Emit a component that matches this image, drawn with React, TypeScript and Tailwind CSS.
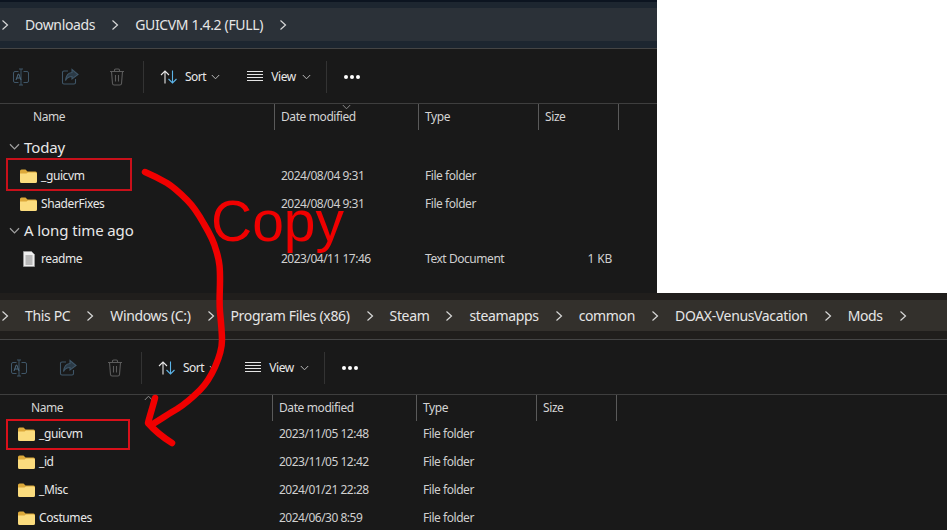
import type { ReactNode } from "react";

const FONT = "font-['Noto_Sans','Open_Sans',sans-serif]";

function Chevron({ className = "" }: { className?: string }) {
  return (
    <svg width="8" height="12" viewBox="0 0 8 12" fill="none" className={`shrink-0 ${className}`}>
      <path d="M1.5 1.5 6.5 6 1.5 10.5" stroke="#d8d8d8" strokeWidth="1.2" />
    </svg>
  );
}

function Caret({ up = false, color = "#b8b8b8", width = 9 }: { up?: boolean; color?: string; width?: number }) {
  return (
    <svg width={width} height={(width * 2) / 3} viewBox="0 0 9 6" fill="none" className="shrink-0">
      <path d={up ? "M.8 5 4.5 1.2 8.2 5" : "M.8 1 4.5 4.8 8.2 1"} stroke={color} strokeWidth="1" />
    </svg>
  );
}

function RenameIcon() {
  return (
    <svg width="18" height="18" viewBox="0 0 18 18" fill="none" stroke="#3f5668" strokeWidth="1">
      <path d="M6.5 3.5H3a1.5 1.5 0 0 0-1.5 1.5v8A1.5 1.5 0 0 0 3 14.500h3.500M11.500 3.500H15A1.500 1.500 0 0 1 16.500 5v8a1.500 1.500 0 0 1-1.500 1.500h-3.500" />
      <path d="M7 1h4M7 17h4M9 1v16" />
      <path d="M4 12 6.200 6h.6L9 12M4.800 10h3.400" stroke="#4d6a80" />
    </svg>
  );
}

function ShareIcon() {
  return (
    <svg width="18" height="18" viewBox="0 0 18 18" fill="none" stroke="#3f5668" strokeWidth="1.100">
      <path d="M7 3H3a1.500 1.500 0 0 0-1.500 1.500v10A1.500 1.500 0 0 0 3 16h10a1.500 1.500 0 0 0 1.500-1.500V11" />
      <path d="M11 1.500 17 6.500 11 11V8.500C8 8.500 6 9.500 4.500 12.500 5 8 7 4.800 11 4.500Z" fill="#2b3a46" />
    </svg>
  );
}

function TrashIcon() {
  return (
    <svg width="16" height="18" viewBox="0 0 16 18" fill="none" stroke="#5c5c5c" strokeWidth="1.100">
      <path d="M1 3.500h14M5.500 3.500V2.200c0-.7.500-1.200 1.200-1.200h2.600c.7 0 1.200.5 1.200 1.200v1.300" />
      <path d="M2.500 3.500 3.500 15.500c.1.900.7 1.500 1.600 1.500h5.800c.9 0 1.500-.6 1.600-1.500l1-12" />
      <path d="M6.500 7v6.500M9.500 7v6.500" />
    </svg>
  );
}

function SortIcon() {
  return (
    <svg width="18" height="14" viewBox="0 0 18 14" fill="none" strokeWidth="1.100">
      <path d="M5 13.500V1M1 5l4-4 4 4" stroke="#e8e8e8" />
      <path d="M12.500.500V13M8.500 9l4 4 4-4" stroke="#5cb4e8" />
    </svg>
  );
}

function ViewIcon() {
  return (
    <svg width="16" height="11" viewBox="0 0 16 11" fill="none" stroke="#e4e4e4" strokeWidth="1">
      <path d="M0 .500h16M0 3.500h16M0 6.500h16M0 9.500h16" />
    </svg>
  );
}

function FolderIcon() {
  return (
    <svg width="17" height="14" viewBox="0 0 17 14" className="shrink-0">
      <path d="M0 2a1.500 1.500 0 0 1 1.500-1.500h4L7.500 2.500H15.500A1.500 1.500 0 0 1 17 4v1H0Z" fill="#dca93a" />
      <path d="M0 4.500h6.500L8 3.500h7.500A1.500 1.500 0 0 1 17 5v7.500A1.500 1.500 0 0 1 15.500 14h-14A1.500 1.500 0 0 1 0 12.500Z" fill="#fbdc7e" />
    </svg>
  );
}

function DocIcon() {
  return (
    <svg width="12" height="16" viewBox="0 0 12 16" fill="none" className="shrink-0">
      <path d="M.5.500h8l3 3v12H.500Z" fill="#eeeeee" stroke="#9a9a9a" strokeWidth=".8" />
      <path d="M2.500 5h7M2.500 7h7M2.500 9h7M2.500 11h7M2.500 13h7" stroke="#777777" strokeWidth=".9" />
    </svg>
  );
}

function Crumbs({ items }: { items: string[] }) {
  return (
    <div className="flex items-center gap-[16px] text-[14px] text-[#e6e6e6]">
      {items.map((item, i) => (
        <div key={i} className="contents">
          {item && <span className="whitespace-nowrap tracking-[-0.35px]">{item}</span>}
          <Chevron />
        </div>
      ))}
    </div>
  );
}

function Toolbar() {
  return (
    <div className="flex h-[54px] items-center pl-[12px] pt-[1px] text-[12px] text-[#e8e8e8]">
      <div className="flex w-[131px] items-center">
        <div className="w-[49px]"><RenameIcon /></div>
        <div className="w-[48px]"><ShareIcon /></div>
        <TrashIcon />
      </div>
      <div className="h-[32px] w-px bg-[#333333]" />
      <div className="ml-[16px] flex items-center">
        <SortIcon />
        <span className="ml-[7px] tracking-[-0.5px]">Sort</span>
        <span className="ml-[5px]"><Caret /></span>
      </div>
      <div className="ml-[27px] flex items-center">
        <ViewIcon />
        <span className="ml-[8px] tracking-[-0.4px]">View</span>
        <span className="ml-[6px]"><Caret /></span>
      </div>
      <div className="ml-[15px] h-[32px] w-px bg-[#333333]" />
      <div className="ml-[17px] flex gap-[2px]">
        <i className="size-[4px] rounded-full bg-white" />
        <i className="size-[4px] rounded-full bg-white" />
        <i className="size-[4px] rounded-full bg-white" />
      </div>
    </div>
  );
}

function HeaderCell({ children, indent, sep = true }: { children?: ReactNode; indent: string; sep?: boolean }) {
  return (
    <div className={`flex h-[26px] items-center ${indent} ${sep ? "border-r border-[#5a5a5a]" : ""}`}>
      <span className="tracking-[-0.4px]">{children}</span>
    </div>
  );
}

function Header({ caretUp }: { caretUp: boolean }) {
  return (
    <div className="relative grid grid-cols-[275px_144px_120px_80px] text-[12px] text-[#d4d4d4]">
      <HeaderCell indent="pl-[33px]">Name</HeaderCell>
      <HeaderCell indent="pl-[6px]">Date modified</HeaderCell>
      <HeaderCell indent="pl-[6px]">Type</HeaderCell>
      <HeaderCell indent="pl-[6px]">Size</HeaderCell>
      <span className={`absolute top-0 ${caretUp ? "left-[146px]" : "left-[342px]"}`}>
        <Caret up={caretUp} color="#8a8a8a" />
      </span>
    </div>
  );
}

function Group({ label, height }: { label: string; height: string }) {
  return (
    <div className={`flex items-center pb-[2px] pl-[9px] text-[15px] text-[#e8e8e8] ${height}`}>
      <Caret color="#a0a0a0" width={11} />
      <span className="ml-[4px] tracking-[-0.1px]">{label}</span>
    </div>
  );
}

function Row({ name, date, type, size, doc }: { name: string; date: string; type: string; size?: string; doc?: boolean }) {
  return (
    <div className="grid h-[28px] grid-cols-[275px_144px_120px_80px] items-center text-[12px]">
      <div className="flex items-center">
        <div className="flex w-[41px] justify-center pl-[16px]">{doc ? <DocIcon /> : <FolderIcon />}</div>
        <span className="tracking-[-0.4px] text-[#e8e8e8]">{name}</span>
      </div>
      <span className="pl-[6px] tracking-[-0.5px] text-[#cfcfcf]">{date}</span>
      <span className="pl-[6px] tracking-[-0.45px] text-[#cfcfcf]">{type}</span>
      <span className="pr-[7px] text-right tracking-[-0.2px] text-[#cfcfcf]">{size}</span>
    </div>
  );
}

export default function App() {
  return (
    <div className={`relative h-[530px] w-[947px] overflow-hidden bg-white ${FONT}`}>
      {/* upstream folder */}
      <section className="h-[293px] w-[657px] overflow-hidden bg-[#191919]">
        <div className="h-[2px] bg-[#0c1420]" />
        <div className="border-b border-[#454545] bg-[#1d2630] pb-[7px] pt-[6px]">
          <div className="flex h-[33px] items-center bg-[#2b3138] pl-[1px]">
            <Crumbs items={["", "Downloads", "GUICVM 1.4.2 (FULL)"]} />
          </div>
        </div>
        <Toolbar />
        <div className="border-t border-[#3e3e3e]">
          <Header caretUp={false} />
          <div className="pt-[4px]">
            <Group label="Today" height="h-[28px]" />
            <Row name="_guicvm" date="2024/08/04 9:31" type="File folder" />
            <Row name="ShaderFixes" date="2024/08/04 9:31" type="File folder" />
            <Group label="A long time ago" height="h-[27px]" />
            <Row doc name="readme" date="2023/04/11 17:46" type="Text Document" size="1 KB" />
          </div>
        </div>
      </section>

      {/* game's Mods folder */}
      <section className="h-[237px] overflow-hidden bg-[#191919]">
        <div className="border-b border-[#454545] bg-[#201e1c] pb-[8px] pt-[7px]">
          <div className="flex h-[31px] items-center bg-[#33302c] pl-[1px]">
            <Crumbs items={["", "This PC", "Windows (C:)", "Program Files (x86)", "Steam", "steamapps", "common", "DOAX-VenusVacation", "Mods"]} />
          </div>
        </div>
        <div className="-ml-[2px]">
          <Toolbar />
          <div className="border-t border-[#3e3e3e]">
            <Header caretUp />
            <div className="-mt-[1px]">
              <Row name="_guicvm" date="2023/11/05 12:48" type="File folder" />
              <Row name="_id" date="2023/11/05 12:42" type="File folder" />
              <Row name="_Misc" date="2024/01/21 22:28" type="File folder" />
              <Row name="Costumes" date="2024/06/30 8:59" type="File folder" />
            </div>
          </div>
        </div>
      </section>

      {/* hand-drawn annotations over the screenshots */}
      <div className="absolute left-[6px] top-[158px] h-[33px] w-[126px] border-2 border-[#c8101a]" />
      <div className="absolute left-[6px] top-[419px] h-[31px] w-[124px] border-2 border-[#d8101a]" />
      <span className="absolute left-[211px] top-[189px] font-['Liberation_Sans',sans-serif] text-[57px] leading-[64px] text-[#f00000]">
        Copy
      </span>
      <svg width="947" height="530" viewBox="0 0 947 530" fill="none" className="pointer-events-none absolute left-0 top-0">
        <path
          d="M145 172C152 175 160 179 167 183C175 188 181 194 187 200C194 207 199 215 204 224C210 234 214 242 216 250C220 262 220 270 220 280C220 292 219 300 220 312C221 322 222 332 222 340C222 350 219 358 215 367C211 376 206 384 200 390C192 398 185 404 177 409C168 414 160 420 151 425"
          stroke="#f00000"
          strokeWidth="6.500"
          strokeLinecap="round"
          strokeLinejoin="round"
        />
        <path d="M155 398C153 406 150 415 148 423C155 431 164 438 172 443" stroke="#f00000" strokeWidth="6.500" strokeLinecap="round" strokeLinejoin="round" />
      </svg>
    </div>
  );
}
